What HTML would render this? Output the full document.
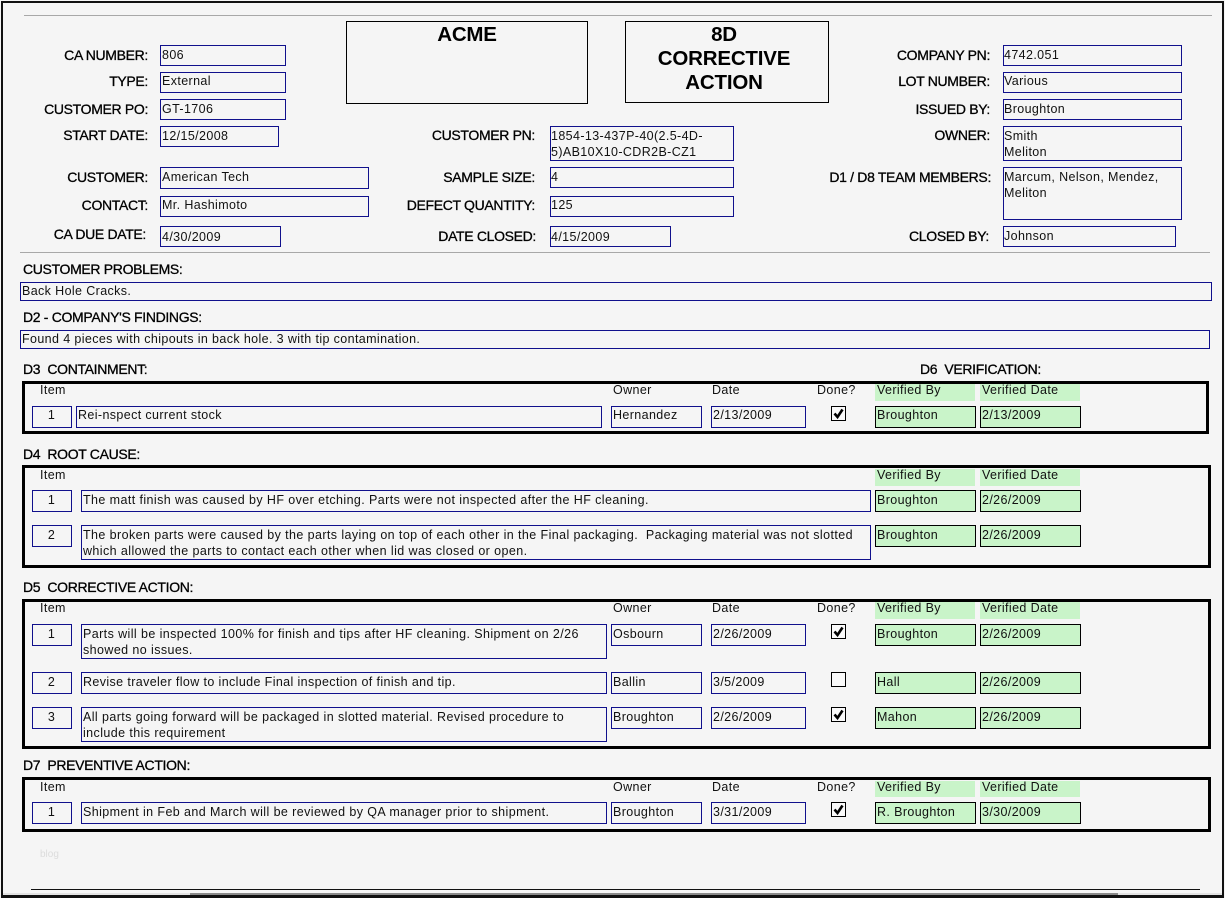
<!DOCTYPE html>
<html><head><meta charset="utf-8"><title>8D Corrective Action</title>
<style>
html,body{margin:0;padding:0;background:#f5f5f5}
body{position:relative;width:1225px;height:898px;overflow:hidden;font-family:"Liberation Sans",sans-serif;font-size:12.5px;color:#111;line-height:16px}
div{position:absolute;box-sizing:border-box}
.b,.g{border:1px solid #10108c;padding:1px 0 0 1px;letter-spacing:.38px;white-space:pre-wrap}
.g{border-color:#000;background:#c9f4c9}
.c{text-align:center;padding:1px 1px 0 0}
.h{background:#c9f4c9;padding-left:2px;letter-spacing:.38px;height:17px}
.t{letter-spacing:.38px;white-space:nowrap}
.l{font-size:14px;white-space:nowrap;letter-spacing:-.33px;-webkit-text-stroke:.3px #000;color:#000}
.r{text-align:right}
.f{border:3px solid #000}
.k{width:15px;height:15px;border:1px solid #000;left:831px;background:#fafafa}
.k svg{position:absolute;left:0;top:0}
.big{font-size:20.5px;font-weight:bold;line-height:24px;text-align:center;color:#000;letter-spacing:-.2px;padding-top:1px}
.u{padding-top:0}
.d{padding-top:2px}
.n{padding-left:0}
.w{letter-spacing:.41px}
</style></head><body>
<div style="left:1px;top:1px;width:1223px;height:897px;border:2px solid #111;border-bottom:0"></div>
<div style="left:1px;top:895px;width:1223px;height:3px;background:#111"></div>
<div style="left:3px;top:893px;width:1219px;height:2px;background:#e2e2e2"></div>
<div style="left:190px;top:893px;width:928px;height:2px;background:#8a8a8a"></div>
<div style="left:24px;top:15px;width:1188px;height:1px;background:#a8a8a8"></div>
<div style="left:20px;top:252px;width:1190px;height:1px;background:#a8a8a8"></div>
<div style="left:31px;top:889px;width:1169px;height:1px;background:#111"></div>

<div class="big" style="left:346px;top:21px;width:242px;height:83px;border:1px solid #000">ACME</div>
<div class="big" style="left:625px;top:21px;width:204px;height:82px;border:1px solid #000;padding-right:6px">8D<br>CORRECTIVE<br>ACTION</div>

<div class="l r" style="right:1077px;top:47px">CA NUMBER:</div>
<div class="l r" style="right:1077px;top:73px">TYPE:</div>
<div class="l r" style="right:1077px;top:101px">CUSTOMER PO:</div>
<div class="l r" style="right:1077px;top:127px">START DATE:</div>
<div class="l r" style="right:1077px;top:169px">CUSTOMER:</div>
<div class="l r" style="right:1077px;top:197px">CONTACT:</div>
<div class="l r" style="right:1079px;top:226px">CA DUE DATE:</div>
<div class="b" style="left:160px;top:45px;width:126px;height:21px">806</div>
<div class="b u" style="left:160px;top:72px;width:126px;height:21px">External</div>
<div class="b" style="left:160px;top:99px;width:126px;height:21px">GT-1706</div>
<div class="b" style="left:160px;top:126px;width:119px;height:21px">12/15/2008</div>
<div class="b" style="left:160px;top:167px;width:209px;height:22px">American Tech</div>
<div class="b u" style="left:160px;top:196px;width:209px;height:21px">Mr. Hashimoto</div>
<div class="b d" style="left:160px;top:226px;width:121px;height:21px">4/30/2009</div>

<div class="l r" style="right:690px;top:127px">CUSTOMER PN:</div>
<div class="l r" style="right:690px;top:169px">SAMPLE SIZE:</div>
<div class="l r" style="right:690px;top:197px">DEFECT QUANTITY:</div>
<div class="l r" style="right:689px;top:228px">DATE CLOSED:</div>
<div class="b n" style="left:550px;top:126px;width:184px;height:35px">1854-13-437P-40(2.5-4D-<br>5)AB10X10-CDR2B-CZ1</div>
<div class="b n" style="left:550px;top:167px;width:184px;height:21px">4</div>
<div class="b n u" style="left:550px;top:196px;width:184px;height:21px">125</div>
<div class="b n d" style="left:550px;top:226px;width:121px;height:21px">4/15/2009</div>

<div class="l r" style="right:235px;top:47px">COMPANY PN:</div>
<div class="l r" style="right:235px;top:73px">LOT NUMBER:</div>
<div class="l r" style="right:235px;top:101px">ISSUED BY:</div>
<div class="l r" style="right:235px;top:127px">OWNER:</div>
<div class="l r" style="right:234px;top:169px">D1 / D8 TEAM MEMBERS:</div>
<div class="l r" style="right:236px;top:228px">CLOSED BY:</div>
<div class="b n" style="left:1003px;top:45px;width:179px;height:21px">4742.051</div>
<div class="b n u" style="left:1003px;top:72px;width:179px;height:21px">Various</div>
<div class="b n" style="left:1003px;top:99px;width:179px;height:21px">Broughton</div>
<div class="b n" style="left:1003px;top:126px;width:179px;height:35px">Smith<br>Meliton</div>
<div class="b n" style="left:1003px;top:167px;width:179px;height:53px">Marcum, Nelson, Mendez,<br>Meliton</div>
<div class="b n" style="left:1003px;top:226px;width:173px;height:21px">Johnson</div>

<div class="l" style="left:23px;top:261px">CUSTOMER PROBLEMS:</div>
<div class="b u" style="left:20px;top:282px;width:1192px;height:19px">Back Hole Cracks.</div>
<div class="l" style="left:23px;top:309px">D2 - COMPANY'S FINDINGS:</div>
<div class="b u" style="left:20px;top:330px;width:1190px;height:19px">Found 4 pieces with chipouts in back hole. 3 with tip contamination.</div>

<div class="l" style="left:23px;top:361px;white-space:pre">D3  CONTAINMENT:</div>
<div class="l" style="left:920px;top:361px;white-space:pre">D6  VERIFICATION:</div>
<div class="f" style="left:22px;top:381px;width:1187px;height:53px"></div>
<div class="t" style="left:40px;top:382px">Item</div>
<div class="t" style="left:613px;top:382px">Owner</div>
<div class="t" style="left:712px;top:382px">Date</div>
<div class="t" style="left:817px;top:382px">Done?</div>
<div class="h" style="left:875px;top:384px;width:100px;line-height:13px">Verified By</div>
<div class="h" style="left:980px;top:384px;width:100px;line-height:13px">Verified Date</div>
<div class="b c" style="left:32px;top:406px;width:40px;height:22px;padding-top:0">1</div>
<div class="b u" style="left:76px;top:406px;width:526px;height:22px">Rei-nspect current stock</div>
<div class="b u" style="left:611px;top:406px;width:91px;height:22px">Hernandez</div>
<div class="b u" style="left:711px;top:406px;width:95px;height:22px">2/13/2009</div>
<div class="k" style="top:406px"><svg width="13" height="13" viewBox="0 0 13 13"><path d="M2.5 6.5 L5.5 10 L10.5 2.5" fill="none" stroke="#000" stroke-width="2.6"/></svg></div>
<div class="g u" style="left:875px;top:406px;width:101px;height:22px">Broughton</div>
<div class="g u" style="left:980px;top:406px;width:101px;height:22px">2/13/2009</div>

<div class="l" style="left:23px;top:446px;white-space:pre">D4  ROOT CAUSE:</div>
<div class="f" style="left:22px;top:465px;width:1189px;height:103px"></div>
<div class="t" style="left:40px;top:467px">Item</div>
<div class="h" style="left:875px;top:469px;width:100px;line-height:13px">Verified By</div>
<div class="h" style="left:980px;top:469px;width:100px;line-height:13px">Verified Date</div>
<div class="b c" style="left:32px;top:490px;width:40px;height:22px">1</div>
<div class="b w" style="left:81px;top:490px;width:790px;height:22px">The matt finish was caused by HF over etching. Parts were not inspected after the HF cleaning.</div>
<div class="g" style="left:875px;top:490px;width:101px;height:22px">Broughton</div>
<div class="g" style="left:980px;top:490px;width:101px;height:22px">2/26/2009</div>
<div class="b c" style="left:32px;top:525px;width:40px;height:22px">2</div>
<div class="b w" style="left:81px;top:525px;width:790px;height:35px">The broken parts were caused by the parts laying on top of each other in the Final packaging.  Packaging material was not slotted<br>which allowed the parts to contact each other when lid was closed or open.</div>
<div class="g" style="left:875px;top:525px;width:101px;height:22px">Broughton</div>
<div class="g" style="left:980px;top:525px;width:101px;height:22px">2/26/2009</div>

<div class="l" style="left:23px;top:579px;white-space:pre">D5  CORRECTIVE ACTION:</div>
<div class="f" style="left:22px;top:599px;width:1189px;height:150px"></div>
<div class="t" style="left:40px;top:600px">Item</div>
<div class="t" style="left:613px;top:600px">Owner</div>
<div class="t" style="left:712px;top:600px">Date</div>
<div class="t" style="left:817px;top:600px">Done?</div>
<div class="h" style="left:875px;top:602px;width:100px;line-height:13px">Verified By</div>
<div class="h" style="left:980px;top:602px;width:100px;line-height:13px">Verified Date</div>

<div class="b c" style="left:32px;top:624px;width:40px;height:22px">1</div>
<div class="b w" style="left:81px;top:624px;width:526px;height:35px">Parts will be inspected 100% for finish and tips after HF cleaning. Shipment on 2/26<br>showed no issues.</div>
<div class="b" style="left:611px;top:624px;width:91px;height:22px">Osbourn</div>
<div class="b" style="left:711px;top:624px;width:95px;height:22px">2/26/2009</div>
<div class="k" style="top:624px"><svg width="13" height="13" viewBox="0 0 13 13"><path d="M2.5 6.5 L5.5 10 L10.5 2.5" fill="none" stroke="#000" stroke-width="2.6"/></svg></div>
<div class="g" style="left:875px;top:624px;width:101px;height:22px">Broughton</div>
<div class="g" style="left:980px;top:624px;width:101px;height:22px">2/26/2009</div>

<div class="b c" style="left:32px;top:672px;width:40px;height:22px">2</div>
<div class="b" style="left:81px;top:672px;width:526px;height:22px">Revise traveler flow to include Final inspection of finish and tip.</div>
<div class="b" style="left:611px;top:672px;width:91px;height:22px">Ballin</div>
<div class="b" style="left:711px;top:672px;width:95px;height:22px">3/5/2009</div>
<div class="k" style="top:672px"></div>
<div class="g" style="left:875px;top:672px;width:101px;height:22px">Hall</div>
<div class="g" style="left:980px;top:672px;width:101px;height:22px">2/26/2009</div>

<div class="b c" style="left:32px;top:707px;width:40px;height:22px">3</div>
<div class="b w" style="left:81px;top:707px;width:526px;height:35px">All parts going forward will be packaged in slotted material. Revised procedure to<br>include this requirement</div>
<div class="b" style="left:611px;top:707px;width:91px;height:22px">Broughton</div>
<div class="b" style="left:711px;top:707px;width:95px;height:22px">2/26/2009</div>
<div class="k" style="top:707px"><svg width="13" height="13" viewBox="0 0 13 13"><path d="M2.5 6.5 L5.5 10 L10.5 2.5" fill="none" stroke="#000" stroke-width="2.6"/></svg></div>
<div class="g" style="left:875px;top:707px;width:101px;height:22px">Mahon</div>
<div class="g" style="left:980px;top:707px;width:101px;height:22px">2/26/2009</div>

<div class="l" style="left:23px;top:757px;white-space:pre">D7  PREVENTIVE ACTION:</div>
<div class="f" style="left:22px;top:777px;width:1189px;height:55px"></div>
<div class="t" style="left:40px;top:779px">Item</div>
<div class="t" style="left:613px;top:779px">Owner</div>
<div class="t" style="left:712px;top:779px">Date</div>
<div class="t" style="left:817px;top:779px">Done?</div>
<div class="h" style="left:875px;top:781px;width:100px;height:16px;line-height:12px">Verified By</div>
<div class="h" style="left:980px;top:781px;width:100px;height:16px;line-height:12px">Verified Date</div>
<div class="b c" style="left:32px;top:802px;width:40px;height:22px">1</div>
<div class="b w" style="left:81px;top:802px;width:526px;height:22px">Shipment in Feb and March will be reviewed by QA manager prior to shipment.</div>
<div class="b" style="left:611px;top:802px;width:91px;height:22px">Broughton</div>
<div class="b" style="left:711px;top:802px;width:95px;height:22px">3/31/2009</div>
<div class="k" style="top:802px"><svg width="13" height="13" viewBox="0 0 13 13"><path d="M2.5 6.5 L5.5 10 L10.5 2.5" fill="none" stroke="#000" stroke-width="2.6"/></svg></div>
<div class="g" style="left:875px;top:802px;width:101px;height:22px">R. Broughton</div>
<div class="g" style="left:980px;top:802px;width:101px;height:22px">3/30/2009</div>

<div class="t" style="left:40px;top:847px;font-size:10px;color:#dcdcdc;letter-spacing:0">blog</div>
</body></html>
